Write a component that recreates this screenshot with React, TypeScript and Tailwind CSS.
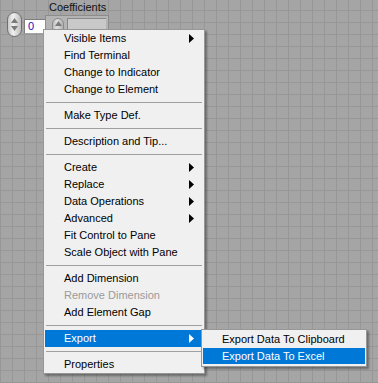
import React from "react";

const Arrow = ({ color }: { color: string }) => (
  <svg width="5" height="9" viewBox="0 0 5 9" className="block">
    <polygon points="0,0 5,4.5 0,9" fill={color} />
  </svg>
);

type Item = { label?: string; sub?: boolean; disabled?: boolean; active?: boolean; sep?: boolean };

const items: Item[] = [
  { label: "Visible Items", sub: true },
  { label: "Find Terminal" },
  { label: "Change to Indicator" },
  { label: "Change to Element" },
  { sep: true },
  { label: "Make Type Def." },
  { sep: true },
  { label: "Description and Tip..." },
  { sep: true },
  { label: "Create", sub: true },
  { label: "Replace", sub: true },
  { label: "Data Operations", sub: true },
  { label: "Advanced", sub: true },
  { label: "Fit Control to Pane" },
  { label: "Scale Object with Pane" },
  { sep: true },
  { label: "Add Dimension" },
  { label: "Remove Dimension", disabled: true },
  { label: "Add Element Gap" },
  { sep: true },
  { label: "Export", sub: true, active: true },
  { sep: true },
  { label: "Properties" },
];

function Spinner({ big }: { big?: boolean }) {
  return (
    <div
      className={
        big
          ? "w-[15px] h-[25px] rounded-full border border-[#6e6e6e] bg-[linear-gradient(to_right,#c8c8c8,#f0f0f0_40%,#bdbdbd)] flex flex-col items-center justify-center gap-[3px]"
          : "w-[12px] h-[14px] rounded-t-full border border-[#8a8a8a] bg-[linear-gradient(to_right,#bdbdbd,#e0e0e0_40%,#b0b0b0)] flex flex-col items-center pt-[2px]"
      }
    >
      <svg width="7" height="5" viewBox="0 0 7 5" className="block">
        <polygon points="3.5,0 7,5 0,5" fill="#7a7a7a" />
      </svg>
      {big && (
        <svg width="7" height="5" viewBox="0 0 7 5" className="block">
          <polygon points="0,0 7,0 3.5,5" fill="#7a7a7a" />
        </svg>
      )}
    </div>
  );
}

export default function App() {
  return (
    <div className="relative w-[378px] h-[383px] overflow-hidden bg-[#a5a5a5] bg-[linear-gradient(to_right,#979797_1px,transparent_1px),linear-gradient(to_bottom,#979797_1px,transparent_1px)] bg-[size:12px_12px] bg-[position:0px_10px] font-['Liberation_Sans',Arial,sans-serif] text-[11px] text-black">
      {/* Front panel array control */}
      <div className="absolute left-[49px] top-[1px] leading-[13px] text-[11px] text-[#111]">Coefficients</div>
      <div className="absolute left-[7px] top-[12px]">
        <Spinner big />
      </div>
      <div className="absolute left-[24px] top-[19px] w-[21px] h-[14px] bg-white border-t border-l border-[#7d7d7d] pl-[3px] leading-[13px] text-[#1010c0]">
        0
      </div>
      <div className="absolute left-[45px] top-[15px] w-[64px] h-[20px] border border-[#8c8c8c] bg-[#b4b4b4] flex items-start gap-[3px] pl-[6px] pt-[2px]">
        <Spinner />
        <div className="flex-1 h-[14px] mr-[2px] border-t border-l border-[#8a8a8a] bg-[#c9c9c9]" />
      </div>

      {/* Main context menu */}
      <div className="absolute left-[43px] top-[29px] w-[162px] bg-[#f0f0f0] border border-[#979797] shadow-[2px_2px_2px_rgba(0,0,0,0.35)] flex flex-col">
        {items.map((it, i) =>
          it.sep ? (
            <div key={i} className="h-[9px] flex flex-col justify-center px-[2px]">
              <div className="h-px bg-[#a0a0a0]" />
            </div>
          ) : (
            <div
              key={i}
              className={
                "h-[17px] flex items-center ml-[1px] mr-[3px] pl-[19px] pr-[7px] " +
                (it.active ? "bg-[#0078d7] text-white" : it.disabled ? "text-[#9a9a9a]" : "text-black")
              }
            >
              <span className="flex-1 leading-[17px] whitespace-nowrap">{it.label}</span>
              {it.sub && <Arrow color={it.active ? "#ffffff" : "#000000"} />}
            </div>
          )
        )}
      </div>

      {/* Submenu */}
      <div className="absolute left-[201px] top-[329px] w-[166px] bg-[#f0f0f0] border border-[#979797] shadow-[2px_2px_2px_rgba(0,0,0,0.35)] pt-[1px] pb-[2px] flex flex-col">
        <div className="h-[17px] flex items-center mx-[1px] pl-[19px] leading-[17px] whitespace-nowrap">Export Data To Clipboard</div>
        <div className="h-[16px] flex items-center mx-[1px] pl-[19px] leading-[16px] whitespace-nowrap bg-[#0078d7] text-white">Export Data To Excel</div>
      </div>
    </div>
  );
}
